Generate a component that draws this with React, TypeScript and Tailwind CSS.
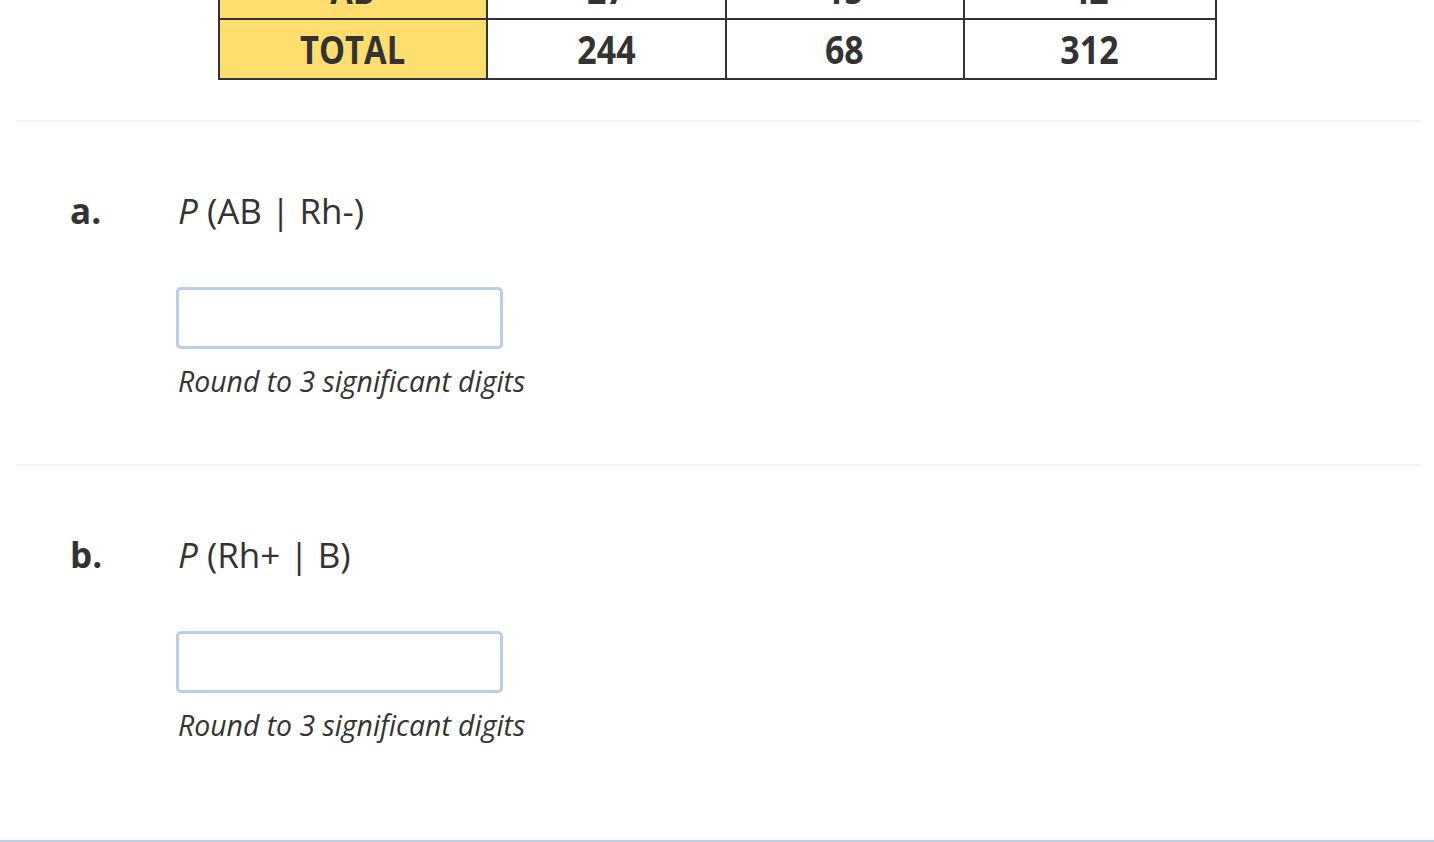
const rows = [
  { label: "AB", cells: ["27", "15", "42"] },
  { label: "TOTAL", cells: ["244", "68", "312"] },
];

const questions = [
  { key: "a.", expr: "(AB | Rh-)" },
  { key: "b.", expr: "(Rh+ | B)" },
];

function Question({ q, last }: { q: { key: string; expr: string }; last?: boolean }) {
  return (
    <div
      className={`flex border-t-2 border-[#efefef] pt-[66px] ${last ? "pb-[96px]" : "pb-[64px]"}`}
    >
      <div className="w-[162px] shrink-0 pl-[54px] text-[35px] font-bold leading-[46px] text-[#333]">
        {q.key}
      </div>
      <div className="flex flex-col">
        <div className="text-[35px] leading-[46px] text-[#333]">
          <i>P</i> {q.expr}
        </div>
        <input
          type="text"
          className="-ml-[2px] mt-[53px] h-[62px] w-[327px] rounded-[5px] border-[3px] border-[#b9cfe8] bg-white px-3 text-[24px] outline-none"
        />
        <div className="mt-[13px] text-[28.4px] italic leading-[38px] text-[#333]">
          Round to 3 significant digits
        </div>
      </div>
    </div>
  );
}

export default function App() {
  return (
    <div className="min-h-[842px] bg-white font-['Open_Sans',sans-serif]">
      <div className="h-[120px] overflow-hidden">
        <table className="mx-auto -mt-[42px] w-[999px] border-collapse border-2 border-[#333] text-[#333]">
          <tbody>
            {rows.map((r) => (
              <tr key={r.label} className="h-[60px]">
                <td className="w-[269px] border-2 border-[#333] bg-[#fede6f] text-center">
                  <span className="inline-block scale-x-[0.84] text-[39px] font-bold leading-none">
                    {r.label}
                  </span>
                </td>
                {r.cells.map((c, i) => (
                  <td
                    key={i}
                    className={`${i === 2 ? "w-[252px]" : "w-[239px]"} border-2 border-[#333] text-center`}
                  >
                    <span className="inline-block scale-x-[0.87] text-[39px] font-bold leading-none">
                      {c}
                    </span>
                  </td>
                ))}
              </tr>
            ))}
          </tbody>
        </table>
      </div>
      <div className="ml-4 mr-[14px]">
        {questions.map((q, i) => (
          <Question key={q.key} q={q} last={i === questions.length - 1} />
        ))}
      </div>
      <div className="h-[2px] bg-[#b9cfe8]" />
    </div>
  );
}
